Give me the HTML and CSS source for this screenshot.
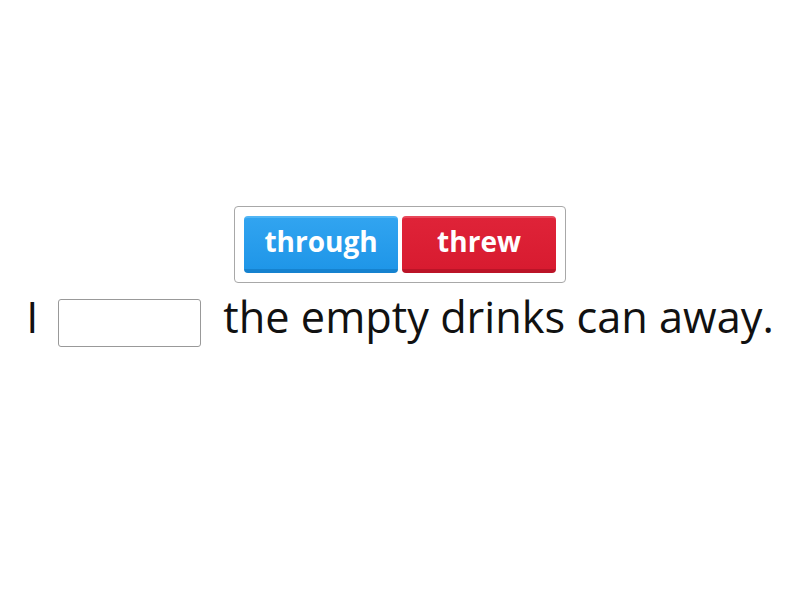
FILE: index.html
```html
<!DOCTYPE html>
<html>
<head>
<meta charset="utf-8">
<link rel="stylesheet" href="styles.css">
</head>
<body>
<main class="stage">
  <div class="tiles">
    <div class="tile tile-blue">through</div>
    <div class="tile tile-red">threw</div>
  </div>
  <div class="sentence">
    <span class="word">I</span>
    <span class="blank"></span>
    <span class="word">the empty drinks can away.</span>
  </div>
</main>
</body>
</html>
```
FILE: styles.css
```css
html, body {
  margin: 0;
  padding: 0;
  background: #ffffff;
}
.stage {
  width: 800px;
  height: 600px;
  display: flex;
  flex-direction: column;
  align-items: center;
  padding-top: 206px;
  box-sizing: border-box;
  font-family: "Open Sans", sans-serif;
}
.tiles {
  display: flex;
  gap: 4px;
  padding: 9px;
  border: 1px solid #a8a8a8;
  border-radius: 4px;
}
.tile {
  width: 154px;
  height: 57px;
  box-sizing: border-box;
  border-radius: 4px;
  color: #ffffff;
  font-weight: 700;
  font-size: 28px;
  display: flex;
  align-items: center;
  justify-content: center;
  padding-bottom: 5px;
}
.tile-blue {
  background: linear-gradient(#31a4f0, #1f96e8);
  border-top: 2px solid #52b6f5;
  border-bottom: 4px solid #1582cf;
}
.tile-red {
  background: linear-gradient(#df2338, #d81b30);
  border-top: 2px solid #e8485a;
  border-bottom: 4px solid #bb1427;
}
.sentence {
  display: flex;
  align-items: flex-start;
  margin-top: 16px;
  font-size: 43.3px;
  color: #111111;
}
.word {
  line-height: 36.4px;
}
.blank {
  display: block;
  width: 143px;
  height: 48px;
  box-sizing: border-box;
  border: 1px solid #999999;
  border-radius: 3px;
  margin: 0 22px 0 20px;
}
```
